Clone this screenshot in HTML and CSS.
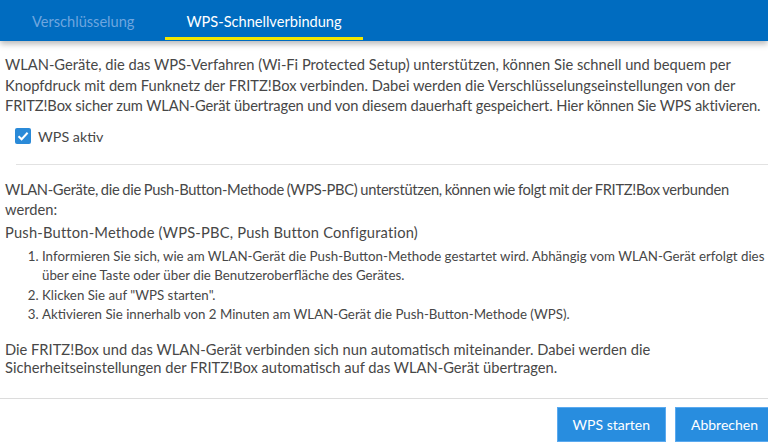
FILE: index.html
```html
<!DOCTYPE html>
<html lang="de">
<head>
<meta charset="utf-8">
<link rel="stylesheet" href="styles.css">
</head>
<body>
<div class="page">
  <header class="tabs">
    <div class="tab">Verschlüsselung</div>
    <div class="tab active">WPS-Schnellverbindung</div>
  </header>
  <main class="content">
    <p class="p1">WLAN-Geräte, die das WPS-Verfahren (Wi-Fi Protected Setup) unterstützen, können Sie schnell und bequem per<br>Knopfdruck mit dem Funknetz der FRITZ!Box verbinden. Dabei werden die Verschlüsselungseinstellungen von der<br><span class="tight">FRITZ!Box sicher zum WLAN-Gerät übertragen und von diesem dauerhaft gespeichert. Hier können Sie WPS aktivieren.</span></p>
    <label class="check">
      <span class="box"><svg viewBox="0 0 16 16" width="16" height="16"><path d="M3.5 8.2 L6.6 11.2 L12.6 4.8" fill="none" stroke="#fff" stroke-width="2"/></svg></span>
      <span>WPS aktiv</span>
    </label>
    <hr class="rule">
    <p class="p2"><span class="tighter">WLAN-Geräte, die die Push-Button-Methode (WPS-PBC) unterstützen, können wie folgt mit der FRITZ!Box verbunden</span><br>werden:</p>
    <p class="p3">Push-Button-Methode (WPS-PBC, Push Button Configuration)</p>
    <ol class="steps">
      <li>Informieren Sie sich, wie am WLAN-Gerät die Push-Button-Methode gestartet wird. Abhängig vom WLAN-Gerät erfolgt dies<br>über eine Taste oder über die Benutzeroberfläche des Gerätes.</li>
      <li>Klicken Sie auf "WPS starten".</li>
      <li>Aktivieren Sie innerhalb von 2 Minuten am WLAN-Gerät die Push-Button-Methode (WPS).</li>
    </ol>
    <p class="p4">Die FRITZ!Box und das WLAN-Gerät verbinden sich nun automatisch miteinander. Dabei werden die<br>Sicherheitseinstellungen der FRITZ!Box automatisch auf das WLAN-Gerät übertragen.</p>
  </main>
  <footer class="actions">
    <button class="btn">WPS starten</button>
    <button class="btn last">Abbrechen</button>
  </footer>
</div>
</body>
</html>
```
FILE: styles.css
```css
* { box-sizing: border-box; }
html, body { margin: 0; padding: 0; }
body {
  width: 768px;
  height: 447px;
  overflow: hidden;
  background: #fff;
  font-family: "Lato", "Liberation Sans", sans-serif;
  font-size: 14.7px;
  color: #474747;
}
.page { width: 768px; position: relative; height: 447px; overflow: hidden; }
.tabs {
  height: 41px;
  background: #006cc0;
  display: flex;
  padding-left: 11px;
  gap: 10px;
  box-shadow: 0 3px 6px rgba(0,0,0,0.28);
  position: relative;
  z-index: 1;
}
.tab {
  padding: 0 21px;
  line-height: 44px;
  font-size: 14.6px;
  color: #6ea6df;
  border-bottom: 3px solid transparent;
  height: 40px;
  white-space: nowrap;
}
.tab.active {
  color: #fff;
  border-bottom-color: #f2e600;
}
.content {
  padding: 13px 0 0 5px;
}
.content p { margin: 0; line-height: 20.5px; white-space: nowrap; }
.tight { letter-spacing: -0.12px; }
.tighter { letter-spacing: -0.3px; word-spacing: -0.6px; }
.check {
  display: flex;
  align-items: center;
  gap: 7px;
  margin: 12px 0 0 10px;
  font-size: 14.3px;
}
.box {
  width: 16px;
  height: 16px;
  background: #2a8ad8;
  border-radius: 2px;
  display: flex;
}
.rule {
  border: 0;
  border-top: 1px solid #e2e2e2;
  margin: 19px 0 0 11px;
}
.content .p2 { margin-top: 14px; line-height: 20px; }
.content .p3 { margin-top: 3px; letter-spacing: 0.2px; }
.steps {
  margin: 5px 0 0 0;
  padding-left: 37px;
  font-size: 13.3px;
  line-height: 19.3px;
  white-space: nowrap;
}
.content .p4 { margin-top: 17px; line-height: 17.5px; }
.actions {
  border-top: 1px solid #dcdcdc;
  position: absolute;
  left: 0;
  top: 398px;
  width: 768px;
  display: flex;
  justify-content: flex-end;
  gap: 9px;
  padding-top: 8px;
}
.btn {
  font-family: inherit;
  font-size: 14px;
  color: #fff;
  background: #288ddf;
  border: 1px solid #5aaaf0;
  height: 35px;
  padding: 0 15px;
  flex: none;
}
.btn.last { margin-right: -6px; }
```
